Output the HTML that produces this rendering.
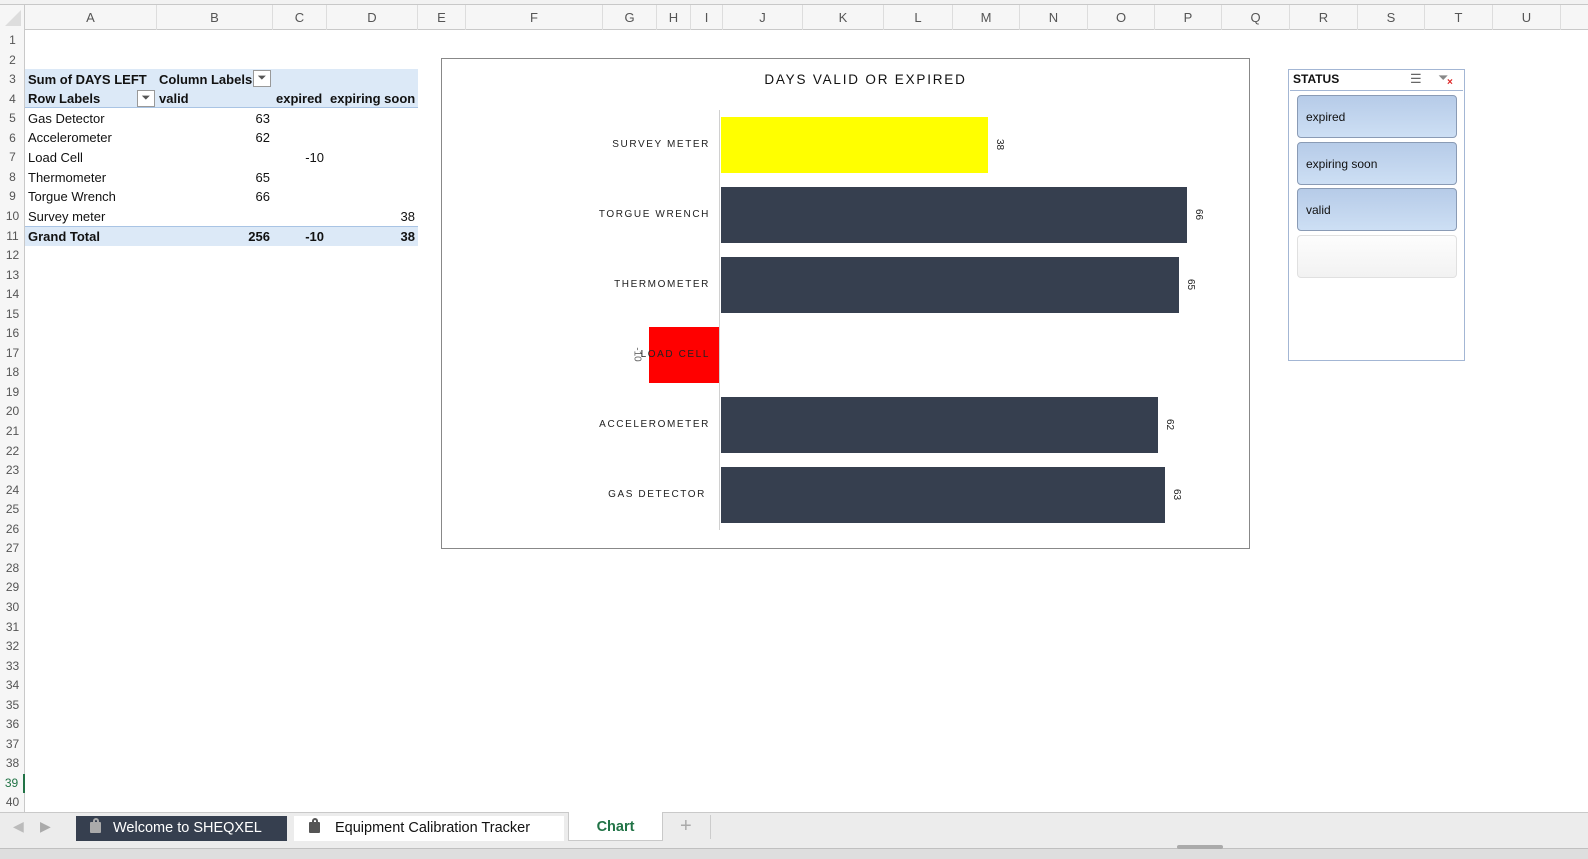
<!DOCTYPE html>
<html><head><meta charset="utf-8"><style>
*{margin:0;padding:0;box-sizing:border-box}
body{width:1588px;height:859px;background:#fff;position:relative;overflow:hidden;font-family:"Liberation Sans",sans-serif}
.a{position:absolute}
.colh{position:absolute;top:5px;height:25px;border-right:1px solid #ddd;text-align:center;font-size:13px;color:#555;line-height:25px}
.rowh{position:absolute;left:0;width:25px;text-align:center;font-size:12px;color:#555;height:19.5px;line-height:19.5px}
.cell{position:absolute;font-size:13px;color:#111;height:19.5px;line-height:19.5px;white-space:nowrap}
.b{font-weight:bold}
.cl{position:absolute;font-size:10px;letter-spacing:1.6px;color:#222;text-align:right;width:200px}
.bar{position:absolute;background:#363f4f}
.v{position:absolute;font-size:10px;color:#222;transform:rotate(90deg)}
.sl{position:absolute;left:1297px;width:160px;height:43px;border:1px solid #8a9bb5;border-radius:4px;background:linear-gradient(#b6cbe8,#cddff4);font-size:12px;line-height:43px;padding-left:8px;color:#111}
</style></head><body>
<div class="a" style="left:0;top:0;width:1588px;height:5px;background:#f2f2f2;border-bottom:1px solid #c8c8c8"></div>
<div class="a" style="left:0;top:5px;width:1588px;height:25px;background:#f6f6f6;border-bottom:1px solid #c9c9c9"></div>
<div class="a" style="left:0;top:5px;width:25px;height:807px;background:#f6f6f6;border-right:1px solid #c9c9c9"></div>
<svg class="a" style="left:4px;top:9px" width="18" height="18"><polygon points="17,1 17,17 1,17" fill="#ddd"/></svg>
<div class="colh" style="left:25px;width:132px">A</div>
<div class="colh" style="left:157px;width:116px">B</div>
<div class="colh" style="left:273px;width:54px">C</div>
<div class="colh" style="left:327px;width:91px">D</div>
<div class="colh" style="left:418px;width:48px">E</div>
<div class="colh" style="left:466px;width:137px">F</div>
<div class="colh" style="left:603px;width:54px">G</div>
<div class="colh" style="left:657px;width:34px">H</div>
<div class="colh" style="left:691px;width:32px">I</div>
<div class="colh" style="left:723px;width:80px">J</div>
<div class="colh" style="left:803px;width:81px">K</div>
<div class="colh" style="left:884px;width:69px">L</div>
<div class="colh" style="left:953px;width:67px">M</div>
<div class="colh" style="left:1020px;width:68px">N</div>
<div class="colh" style="left:1088px;width:67px">O</div>
<div class="colh" style="left:1155px;width:67px">P</div>
<div class="colh" style="left:1222px;width:68px">Q</div>
<div class="colh" style="left:1290px;width:68px">R</div>
<div class="colh" style="left:1358px;width:67px">S</div>
<div class="colh" style="left:1425px;width:68px">T</div>
<div class="colh" style="left:1493px;width:68px">U</div>
<div id="rows"></div>
<script>
var h='';for(var i=1;i<=40;i++){var t=31+(i-1)*19.55;h+='<div class="rowh" style="top:'+t+'px;'+(i==39?'color:#217346;border-right:2px solid #217346':'')+'">'+i+'</div>';}
document.getElementById('rows').innerHTML=h;
</script>
<!-- pivot -->
<div class="a" style="left:25px;top:69px;width:393px;height:39px;background:#dce9f7;border-bottom:1px solid #a9c4e4"></div>
<div class="a" style="left:25px;top:226px;width:393px;height:20px;background:#dce9f7;border-top:1px solid #a9c4e4"></div>
<div class="cell b" style="left:28px;top:70px">Sum of DAYS LEFT</div>
<div class="cell b" style="left:159px;top:70px">Column Labels</div>
<div class="a" style="left:253px;top:70px;width:18px;height:17px;border:1px solid #999;background:#fff;font-size:11px;text-align:center;line-height:15px;color:#555">⏷</div>
<div class="cell b" style="left:28px;top:89px">Row Labels</div>
<div class="a" style="left:137px;top:90px;width:18px;height:17px;border:1px solid #999;background:#fff;font-size:11px;text-align:center;line-height:15px;color:#555">⏷</div>
<div class="cell b" style="left:159px;top:89px">valid</div>
<div class="cell b" style="left:276px;top:89px">expired</div>
<div class="cell b" style="left:330px;top:89px">expiring soon</div>
<div class="cell" style="left:28px;top:109px">Gas Detector</div><div class="cell" style="left:200px;width:70px;text-align:right;top:109px">63</div>
<div class="cell" style="left:28px;top:128px">Accelerometer</div><div class="cell" style="left:200px;width:70px;text-align:right;top:128px">62</div>
<div class="cell" style="left:28px;top:148px">Load Cell</div><div class="cell" style="left:280px;width:44px;text-align:right;top:148px">-10</div>
<div class="cell" style="left:28px;top:168px">Thermometer</div><div class="cell" style="left:200px;width:70px;text-align:right;top:168px">65</div>
<div class="cell" style="left:28px;top:187px">Torgue Wrench</div><div class="cell" style="left:200px;width:70px;text-align:right;top:187px">66</div>
<div class="cell" style="left:28px;top:207px">Survey meter</div><div class="cell" style="left:350px;width:65px;text-align:right;top:207px">38</div>
<div class="cell b" style="left:28px;top:227px">Grand Total</div>
<div class="cell b" style="left:200px;width:70px;text-align:right;top:227px">256</div>
<div class="cell b" style="left:280px;width:44px;text-align:right;top:227px">-10</div>
<div class="cell b" style="left:350px;width:65px;text-align:right;top:227px">38</div>
<!-- chart -->
<div class="a" style="left:441px;top:58px;width:809px;height:491px;border:1px solid #888;background:#fff"></div>
<div class="a" style="left:441px;top:72px;width:849px;text-align:center;font-size:13.5px;letter-spacing:1.8px;color:#111">DAYS VALID OR EXPIRED</div>
<div class="a" style="left:719px;top:110px;width:1px;height:420px;background:#d0d0d0"></div>
<div class="a" style="left:721px;top:117px;width:267px;height:56px;background:#ffff00"></div>
<div class="bar" style="left:721px;top:187px;width:466px;height:56px"></div>
<div class="bar" style="left:721px;top:257px;width:458px;height:56px"></div>
<div class="a" style="left:649px;top:327px;width:70px;height:56px;background:#ff0000"></div>
<div class="bar" style="left:721px;top:397px;width:437px;height:56px"></div>
<div class="bar" style="left:721px;top:467px;width:444px;height:56px"></div>
<div class="cl" style="left:510px;top:139px">SURVEY METER</div>
<div class="cl" style="left:510px;top:209px">TORGUE WRENCH</div>
<div class="cl" style="left:510px;top:279px">THERMOMETER</div>
<div class="cl" style="left:510px;top:349px">LOAD CELL</div>
<div class="cl" style="left:510px;top:419px">ACCELEROMETER</div>
<div class="cl" style="left:506px;top:489px">GAS DETECTOR</div>
<div class="v" style="left:994px;top:139px">38</div>
<div class="v" style="left:1193px;top:209px">66</div>
<div class="v" style="left:1185px;top:279px">65</div>
<div class="v" style="left:630px;top:349px;color:#666">-10</div>
<div class="v" style="left:1164px;top:419px">62</div>
<div class="v" style="left:1171px;top:489px">63</div>
<!-- slicer -->
<div class="a" style="left:1288px;top:69px;width:177px;height:292px;border:1px solid #a3b6d4;background:#fff"></div>
<div class="a" style="left:1290px;top:90px;width:173px;height:1px;background:#a3b6d4"></div>
<div class="a b" style="left:1293px;top:72px;font-size:12px;color:#111">STATUS</div>
<div class="a" style="left:1410px;top:71px;font-size:13px;color:#666">☰</div>
<div class="a" style="left:1438px;top:70px;font-size:13px;color:#888">⏷</div>
<div class="a" style="left:1447px;top:77px;font-size:10px;color:#d22;font-weight:bold">×</div>
<div class="sl" style="top:95px">expired</div>
<div class="sl" style="top:142px">expiring soon</div>
<div class="sl" style="top:188px">valid</div>
<div class="sl" style="top:235px;background:linear-gradient(#fdfdfd,#f2f2f2);border-color:#e0e0e0"></div>
<!-- tabs -->
<div class="a" style="left:0;top:812px;width:1588px;height:36px;background:#ececec;border-top:1px solid #c9c9c9"></div>
<div class="a" style="left:0;top:848px;width:1588px;height:11px;background:#dedede;border-top:1px solid #c0c0c0"></div>
<div class="a" style="left:13px;top:818px;font-size:14px;color:#bbb">◀</div>
<div class="a" style="left:40px;top:818px;font-size:14px;color:#aaa">▶</div>
<div class="a" style="left:76px;top:816px;width:211px;height:25px;background:#363f4f;color:#fff;font-size:14.5px;line-height:25px;padding-left:37px">Welcome to SHEQXEL</div>
<div class="a" style="left:90px;top:822px;width:11px;height:11px;background:#aaa;border-radius:1px"></div>
<div class="a" style="left:93px;top:818px;width:6px;height:7px;border:2px solid #aaa;border-bottom:none;border-radius:3px 3px 0 0"></div>
<div class="a" style="left:294px;top:816px;width:270px;height:25px;background:#fff;color:#111;font-size:14.5px;line-height:25px;padding-left:41px">Equipment Calibration Tracker</div>
<div class="a" style="left:309px;top:822px;width:11px;height:11px;background:#555;border-radius:1px"></div>
<div class="a" style="left:312px;top:818px;width:6px;height:7px;border:2px solid #555;border-bottom:none;border-radius:3px 3px 0 0"></div>
<div class="a" style="left:568px;top:812px;width:95px;height:29px;background:#fff;color:#217346;font-size:14.5px;font-weight:bold;line-height:31px;text-align:center;border:1px solid #c9c9c9;border-top:none">Chart</div>
<div class="a" style="left:680px;top:815px;font-size:20px;color:#aaa">+</div>
<div class="a" style="left:710px;top:815px;width:1px;height:24px;background:#ccc"></div>
<div class="a" style="left:1177px;top:845px;width:46px;height:4px;background:#aaa;border-radius:2px"></div>
</body></html>
